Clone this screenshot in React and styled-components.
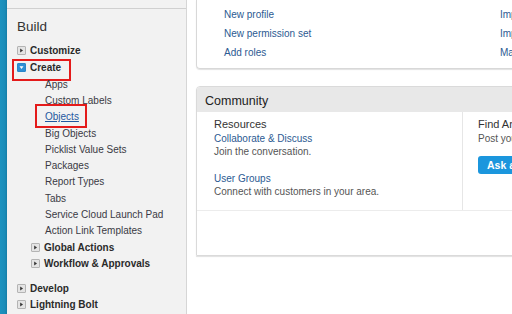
import React from "react";
import styled, { createGlobalStyle } from "styled-components";

const Global = createGlobalStyle`
  html, body { margin: 0; padding: 0; background: #fff; }
  body { font-family: "Liberation Sans", Arial, sans-serif; }
`;

const Page = styled.div`
  display: flex;
  height: 314px;
  width: 512px;
  overflow: hidden;
`;

const Strip = styled.div`
  width: 7px;
  flex: none;
  background: linear-gradient(90deg, #1c93c0 0%, #1a8cb8 70%, #157da6 100%);
`;

const Sidebar = styled.aside`
  width: 179px;
  flex: none;
  background: #f2f2f2;
  border-right: 1px solid #d6d6d6;
  box-shadow: 1px 0 0 #e6e6e6;
  display: flex;
  flex-direction: column;
`;

const SideTop = styled.div`
  height: 8px;
  border-bottom: 1px solid #d0d0d0;
  flex: none;
`;

const SideBody = styled.div`
  padding: 9px 0 0 10px;
`;

const Heading = styled.div`
  font-size: 13.5px;
  color: #333;
  line-height: 18px;
  margin-bottom: 6px;
`;

const Row = styled.div`
  display: flex;
  align-items: center;
  height: 16.3px;
  padding-left: ${(p) => p.$indent || 0}px;
  margin-top: ${(p) => p.$gap || 0}px;
  position: relative;
  font-size: 10px;
  font-weight: ${(p) => (p.$bold ? 700 : 400)};
  color: ${(p) => (p.$bold ? "#2a2a2a" : "#3a3a44")};
  white-space: nowrap;
`;

const Toggle = styled.span`
  width: 9px;
  height: 9px;
  box-sizing: border-box;
  margin-right: 4px;
  flex: none;
  display: inline-flex;
  align-items: center;
  justify-content: center;
  border-radius: 1px;
  background: ${(p) => (p.$open ? "#2d8fd5" : "#e4e4e4")};
  border: 1px solid ${(p) => (p.$open ? "#2a86c9" : "#b4b4b4")};
`;

const Link = styled.a`
  color: #1e58a0;
  text-decoration: underline;
`;

const Highlight = styled.span`
  position: absolute;
  box-sizing: border-box;
  border: 2px solid #e41b1b;
  pointer-events: none;
`;

const Main = styled.main`
  flex: 1;
  min-width: 0;
  padding-left: 9px;
  overflow: hidden;
  background: #fff;
`;

const TopCard = styled.section`
  width: 400px;
  border: 1px solid #d8d8d8;
  border-top: none;
  border-radius: 0 0 4px 4px;
  box-shadow: 0 1px 1px #e2e2e2;
  padding: 4.5px 0 6px 27px;
  display: grid;
  grid-template-columns: 276px 1fr;
`;

const LinkCol = styled.div`
  display: flex;
  flex-direction: column;
`;

const CardLink = styled.div`
  font-size: 10px;
  line-height: 19px;
  color: #2c5a92;
  white-space: nowrap;
`;

const CommunityCard = styled.section`
  width: 400px;
  margin-top: 17px;
  border: 1px solid #dadada;
  border-radius: 4px 4px 0 0;
  box-shadow: 0 1px 1px #e0e0e0;
`;

const CardHeader = styled.header`
  height: 25px;
  background: #e8e8e8;
  border-radius: 3px 3px 0 0;
  padding: 3px 0 0 8px;
  box-sizing: border-box;
  display: flex;
  align-items: center;
  font-size: 12.5px;
  color: #222;
`;

const CardBody = styled.div`
  display: grid;
  grid-template-columns: 265px 1fr;
  border-bottom: 1px solid #ececec;
`;

const Col = styled.div`
  padding: ${(p) => (p.$right ? "4px 0 12px 15px" : "4px 0 12px 17px")};
  border-left: ${(p) => (p.$right ? "1px solid #e6e6e6" : "none")};
  display: flex;
  flex-direction: column;
  align-items: flex-start;
`;

const ColTitle = styled.div`
  font-size: 11px;
  line-height: 16px;
  color: #333;
  white-space: nowrap;
`;

const BlueText = styled.div`
  font-size: 10px;
  line-height: 13px;
  color: #2c5a92;
  margin-top: ${(p) => p.$gap || 0}px;
  white-space: nowrap;
`;

const GreyText = styled.div`
  font-size: 10px;
  line-height: 13px;
  color: #555;
  white-space: nowrap;
`;

const AskButton = styled.button`
  margin-top: 11px;
  height: 18px;
  padding: 0 9px;
  border: none;
  border-radius: 3px;
  background: #1b96dd;
  color: #fff;
  font-family: "Liberation Sans", Arial, sans-serif;
  font-weight: 700;
  font-size: 10.5px;
  white-space: nowrap;
`;

const CardFoot = styled.div`
  height: 44px;
`;

function ToggleIcon({ open }) {
  return (
    <Toggle $open={open}>
      <svg width="5" height="5" viewBox="0 0 5 5">
        {open ? (
          <path d="M0.5 1.2 L4.5 1.2 L2.5 4 Z" fill="#fff" />
        ) : (
          <path d="M1.2 0.5 L4 2.5 L1.2 4.5 Z" fill="#333" />
        )}
      </svg>
    </Toggle>
  );
}

const children = [
  "Apps",
  "Custom Labels",
  "Objects",
  "Big Objects",
  "Picklist Value Sets",
  "Packages",
  "Report Types",
  "Tabs",
  "Service Cloud Launch Pad",
  "Action Link Templates",
];

export default function App() {
  return (
    <>
      <Global />
      <Page>
        <Strip />
        <Sidebar>
          <SideTop />
          <SideBody>
            <Heading>Build</Heading>
            <Row $bold>
              <ToggleIcon />
              Customize
            </Row>
            <Row $bold $gap={0.7}>
              <ToggleIcon open />
              Create
              <Highlight style={{ left: -5, top: 0, width: 59, height: 22 }} />
            </Row>
            {children.map((c, i) => (
              <Row key={c} $indent={28} $gap={i === 0 ? 0.7 : 0}>
                {c === "Objects" ? (
                  <>
                    <Link>Objects</Link>
                    <Highlight style={{ left: 18, top: -5, width: 52, height: 24 }} />
                  </>
                ) : (
                  c
                )}
              </Row>
            ))}
            <Row $bold $indent={14}>
              <ToggleIcon />
              Global Actions
            </Row>
            <Row $bold $indent={14}>
              <ToggleIcon />
              Workflow &amp; Approvals
            </Row>
            <Row $bold $gap={8.5}>
              <ToggleIcon />
              Develop
            </Row>
            <Row $bold>
              <ToggleIcon />
              Lightning Bolt
            </Row>
          </SideBody>
        </Sidebar>
        <Main>
          <TopCard>
            <LinkCol>
              <CardLink>New profile</CardLink>
              <CardLink>New permission set</CardLink>
              <CardLink>Add roles</CardLink>
            </LinkCol>
            <LinkCol>
              <CardLink>Import users</CardLink>
              <CardLink>Import permissions</CardLink>
              <CardLink>Manage users</CardLink>
            </LinkCol>
          </TopCard>
          <CommunityCard>
            <CardHeader>Community</CardHeader>
            <CardBody>
              <Col>
                <ColTitle>Resources</ColTitle>
                <BlueText>Collaborate &amp; Discuss</BlueText>
                <GreyText>Join the conversation.</GreyText>
                <BlueText $gap={14}>User Groups</BlueText>
                <GreyText>Connect with customers in your area.</GreyText>
              </Col>
              <Col $right>
                <ColTitle>Find Answers</ColTitle>
                <GreyText>Post your question</GreyText>
                <AskButton>Ask a Question</AskButton>
              </Col>
            </CardBody>
            <CardFoot />
          </CommunityCard>
        </Main>
      </Page>
    </>
  );
}
